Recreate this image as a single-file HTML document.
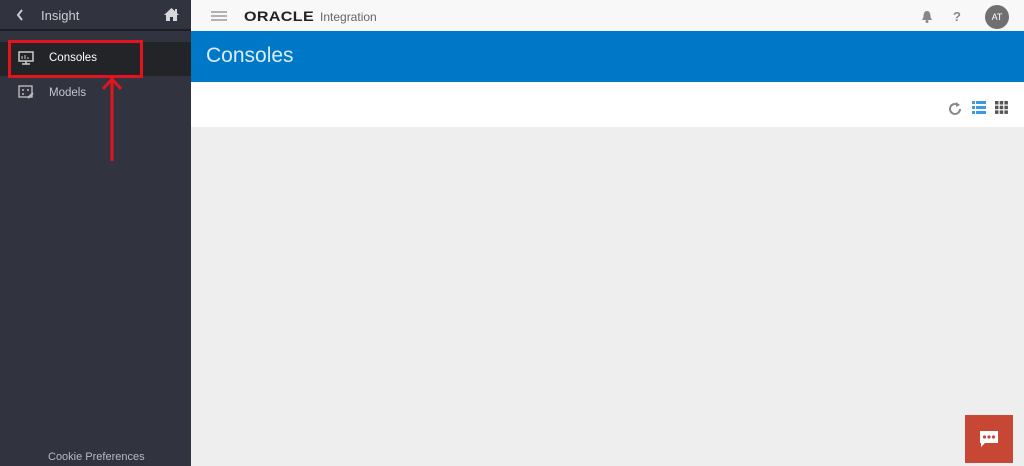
<!DOCTYPE html>
<html><head><style>
*{margin:0;padding:0;box-sizing:border-box}
body{width:1024px;height:466px;overflow:hidden;font-family:"Liberation Sans",sans-serif;background:#eeeeee;position:relative}
.sb{position:absolute;left:0;top:0;width:191px;height:466px;background:#31333f}
.sbh{height:31px;border-bottom:2px solid #1d1e24;color:#c9ccd3;font-size:13px;position:relative}
.row{position:absolute;left:0;width:191px;height:34px;color:#fff;font-size:11.5px}
.main{position:absolute;left:191px;top:0;right:0}
.top{height:31px;background:#f8f8f8;position:relative}
.ban{height:51px;background:#0078c8;color:#dcebf7;font-size:21px;padding:13px 0 0 15px;font-weight:300}
.tb{height:45px;background:#fff;position:relative}
</style></head><body>
<div class="sb">
 <div class="sbh">
  <svg style="position:absolute;left:16px;top:9px" width="8" height="12"><path d="M6 1L2 6L6 11" stroke="#c9ccd3" stroke-width="2" fill="none"/></svg>
  <span style="position:absolute;left:41px;top:8px">Insight</span>
  <svg style="position:absolute;left:163px;top:7px" width="17" height="15" viewBox="0 0 17 15"><path d="M8.5 1 L1 8 H3 V14 H7 V10 H10 V14 H14 V8 H16 Z" fill="#d8d8dc"/><rect x="12" y="2" width="2" height="4" fill="#d8d8dc"/></svg>
 </div>
 <div style="position:absolute;left:0;top:42px;width:3px;height:34px;background:#0a6fbf"></div>
 <div class="row" style="top:42px;background:#222427">
  <svg style="position:absolute;left:18px;top:9px" width="16" height="15" viewBox="0 0 16 15"><rect x="1" y="1" width="14" height="9" fill="none" stroke="#ccc" stroke-width="1.5"/><path d="M4 8V5M7 8V4M10 8V6" stroke="#ccc"/><path d="M8 10v3M4 13h8" stroke="#ccc" stroke-width="1.5"/></svg>
  <span style="position:absolute;left:49px;top:10px">Consoles</span>
 </div>
 <div class="row" style="top:76px;color:#c3c6cc">
  <svg style="position:absolute;left:18px;top:9px" width="17" height="15" viewBox="0 0 17 15"><rect x="1" y="1" width="13" height="11" fill="none" stroke="#bbb" stroke-width="1.4"/><circle cx="5" cy="5" r="1" fill="#bbb"/><circle cx="10" cy="5" r="1" fill="#bbb"/><circle cx="5" cy="9" r="1" fill="#bbb"/><path d="M10 13l5-5" stroke="#bbb" stroke-width="2"/></svg>
  <span style="position:absolute;left:49px;top:11px">Models</span>
 </div>
 <div style="position:absolute;left:8px;top:40px;width:135px;height:38px;border:3px solid #e3141d"></div>
 <svg style="position:absolute;left:100px;top:75px" width="26" height="90"><path d="M12 4V86" stroke="#e3141d" stroke-width="3"/><path d="M3 14L12 4L21 14" stroke="#e3141d" stroke-width="3" fill="none"/></svg>
 <div style="position:absolute;left:48px;top:451px;color:#b6bac4;font-size:11px">Cookie Preferences</div>
</div>
<div class="main">
 <div class="top">
  <svg style="position:absolute;left:20px;top:11px" width="16" height="10"><path d="M0 1h16M0 5h16M0 9h16" stroke="#888" stroke-width="1.3"/></svg>
  <span style="position:absolute;left:53px;top:8px;font-size:14px;font-weight:bold;letter-spacing:0.3px;color:#222;transform:scaleX(1.15);transform-origin:left">ORACLE</span>
  <span style="position:absolute;left:129px;top:10px;font-size:12px;color:#666">Integration</span>
  <svg style="position:absolute;left:730px;top:10px" width="12" height="13"><path d="M6 1C3 1 2.5 4 2.5 7L1 10H11L9.5 7C9.5 4 9 1 6 1Z" fill="#888"/><circle cx="6" cy="11.5" r="1.5" fill="#888"/></svg>
  <span style="position:absolute;left:762px;top:9px;font-size:13px;color:#888;font-weight:bold">?</span>
  <div style="position:absolute;left:794px;top:5px;width:24px;height:24px;border-radius:50%;background:#707070;color:#fff;font-size:9px;text-align:center;line-height:24px">AT</div>
 </div>
 <div class="ban">Consoles</div>
 <div class="tb">
  <svg style="position:absolute;left:757px;top:20px" width="14" height="14"><path d="M12 7A5 5 0 1 1 9 2.4" stroke="#888" stroke-width="2" fill="none"/><path d="M8 0L12 3L8 5Z" fill="#888"/></svg>
  <svg style="position:absolute;left:781px;top:19px" width="14" height="13" fill="#3d9ae0"><rect x="0" y="0" width="3" height="3"/><rect x="4" y="0" width="10" height="3"/><rect x="0" y="5" width="3" height="3"/><rect x="4" y="5" width="10" height="3"/><rect x="0" y="10" width="3" height="3"/><rect x="4" y="10" width="10" height="3"/></svg>
  <svg style="position:absolute;left:804px;top:19px" width="13" height="13" fill="#555"><rect x="0" y="0" width="3.5" height="3.5"/><rect x="4.7" y="0" width="3.5" height="3.5"/><rect x="9.4" y="0" width="3.5" height="3.5"/><rect x="0" y="4.7" width="3.5" height="3.5"/><rect x="4.7" y="4.7" width="3.5" height="3.5"/><rect x="9.4" y="4.7" width="3.5" height="3.5"/><rect x="0" y="9.4" width="3.5" height="3.5"/><rect x="4.7" y="9.4" width="3.5" height="3.5"/><rect x="9.4" y="9.4" width="3.5" height="3.5"/></svg>
 </div>
</div>
<div style="position:absolute;left:965px;top:415px;width:48px;height:48px;background:#c74634">
 <svg style="position:absolute;left:13px;top:15px" width="22" height="19"><path d="M2 1H20V13H7L3 17V13H2Z" fill="#fff"/><circle cx="6.5" cy="7" r="1.6" fill="#c74634"/><circle cx="11" cy="7" r="1.6" fill="#c74634"/><circle cx="15.5" cy="7" r="1.6" fill="#c74634"/></svg>
</div>
</body></html>
